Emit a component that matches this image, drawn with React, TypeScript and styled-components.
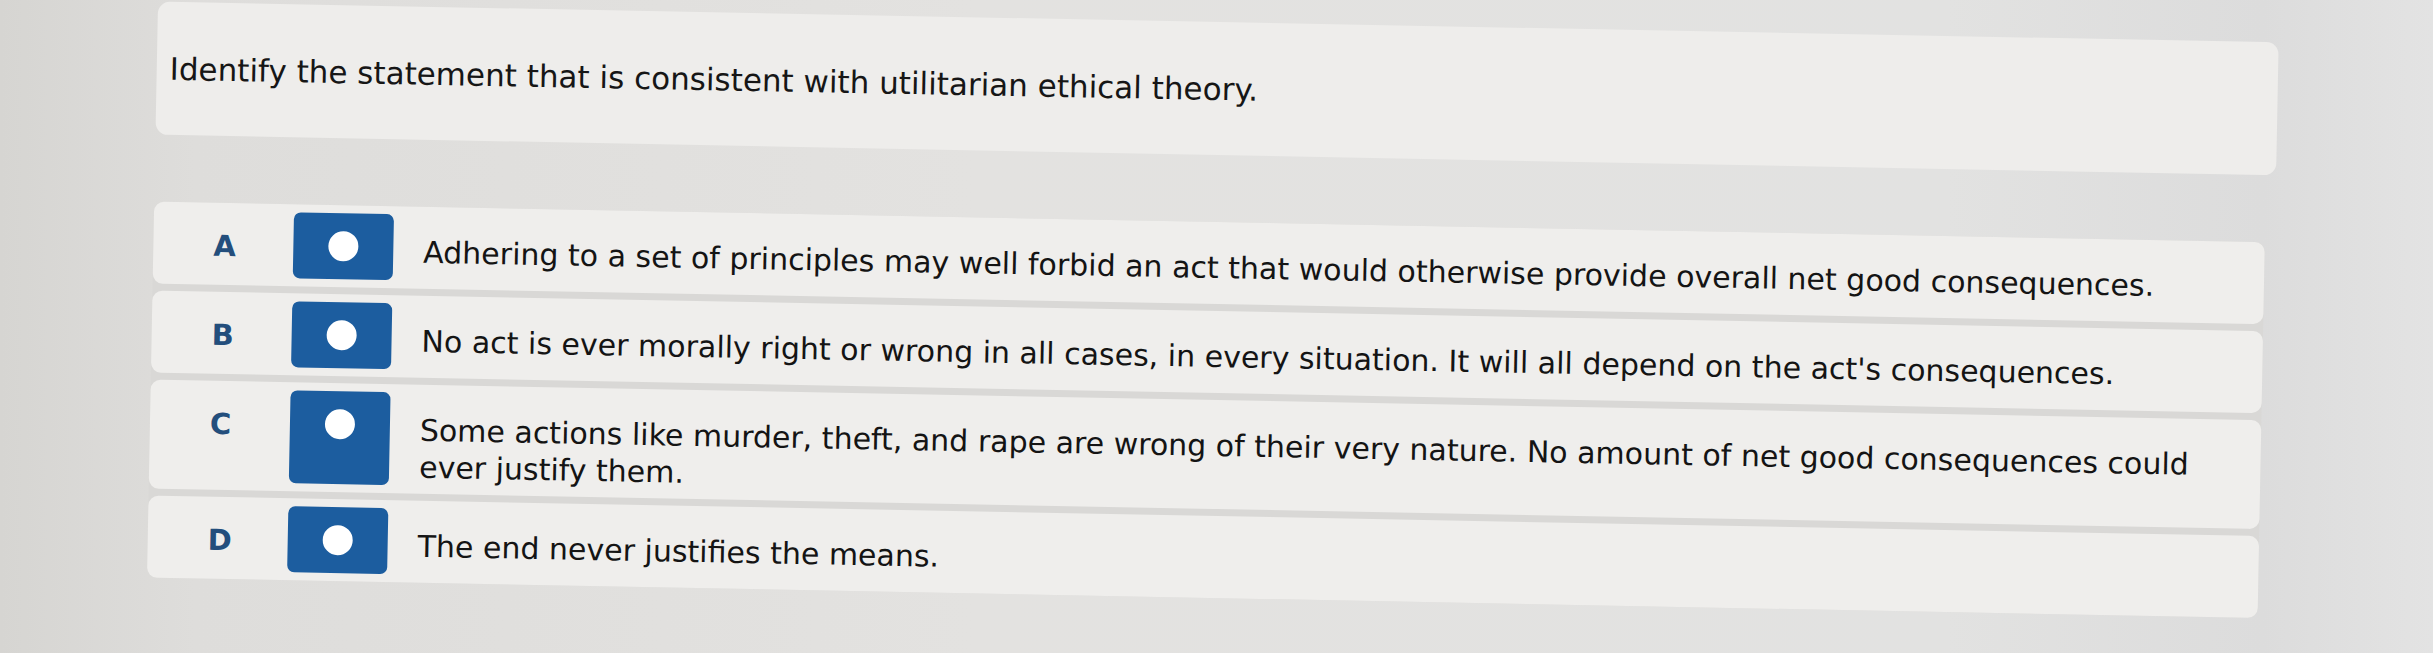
import styled, { createGlobalStyle } from 'styled-components'

const GlobalStyle = createGlobalStyle`
  html, body {
    margin: 0;
    padding: 0;
    overflow: hidden;
    background: linear-gradient(90deg, #d6d5d2 0%, #dedddb 8%, #e3e2e0 40%, #e2e2e1 80%, #dcdcdc 93%, #e3e3e3 100%);
  }
`

const Page = styled.div`
  box-sizing: border-box;
  width: 2433px;
  height: 653px;
  padding: 22px 160px 0 152px;
  font-family: 'DejaVu Sans', Verdana, sans-serif;
  transform: rotate(1.1deg);
  transform-origin: 1216px 326px;
`

const QuestionCard = styled.div`
  display: flex;
  align-items: center;
  height: 133px;
  padding-left: 13px;
  background: #eeedeb;
  border-radius: 12px;
`

const QuestionText = styled.p`
  margin: 0;
  font-size: 31px;
  line-height: 36px;
  color: #161616;
`

const OptionList = styled.ul`
  list-style: none;
  margin: 67px 10px 0 0;
  padding: 0;
  display: flex;
  flex-direction: column;
  gap: 7px;
  background: #d9d8d6;
  border-radius: 10px;
`

const OptionRow = styled.li`
  display: flex;
  align-items: stretch;
  padding: 8px 36px 8px 60px;
  background: #efeeec;
  border-radius: 10px;
`

const Letter = styled.span`
  flex: 0 0 80px;
  padding-top: 17px;
  font-size: 29px;
  line-height: 36px;
  font-weight: bold;
  color: #234e7c;
`

const RadioButton = styled.button`
  flex: 0 0 100px;
  display: flex;
  justify-content: center;
  align-items: flex-start;
  min-height: 66px;
  padding: 18px 0 0;
  border: none;
  border-radius: 7px;
  background: #1c5d9f;
  cursor: pointer;
`

const Dot = styled.span`
  width: 30px;
  height: 30px;
  border-radius: 50%;
  background: #ffffff;
`

const OptionText = styled.span`
  flex: 1;
  padding: 19px 0 0 30px;
  font-size: 30px;
  line-height: 37px;
  color: #141414;
`

const options = [
  {
    letter: 'A',
    text: 'Adhering to a set of principles may well forbid an act that would otherwise provide overall net good consequences.',
  },
  {
    letter: 'B',
    text: "No act is ever morally right or wrong in all cases, in every situation. It will all depend on the act's consequences.",
  },
  {
    letter: 'C',
    text: 'Some actions like murder, theft, and rape are wrong of their very nature. No amount of net good consequences could ever justify them.',
  },
  {
    letter: 'D',
    text: 'The end never justifies the means.',
  },
]

export default function App() {
  return (
    <>
      <GlobalStyle />
      <Page>
        <QuestionCard>
          <QuestionText>
            Identify the statement that is consistent with utilitarian ethical theory.
          </QuestionText>
        </QuestionCard>
        <OptionList>
          {options.map((option) => (
            <OptionRow key={option.letter}>
              <Letter>{option.letter}</Letter>
              <RadioButton aria-label={`Option ${option.letter}`}>
                <Dot />
              </RadioButton>
              <OptionText>{option.text}</OptionText>
            </OptionRow>
          ))}
        </OptionList>
      </Page>
    </>
  )
}
